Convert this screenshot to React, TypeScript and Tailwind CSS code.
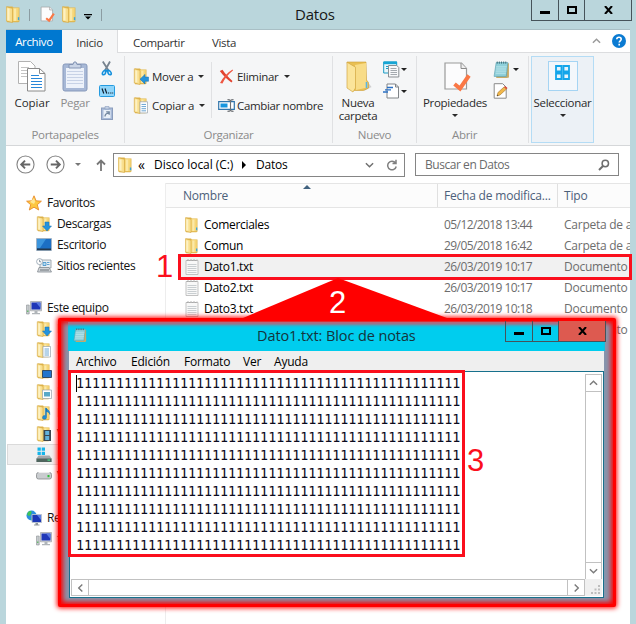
import React from 'react';

type IconProps = { className?: string };

const Folder: React.FC<IconProps & { badge?: React.ReactNode }> = ({ className = 'w-4 h-4', badge }) => (
  <svg viewBox={badge ? '0 0 16 16' : '1 0 13 16'} preserveAspectRatio="none" className={`shrink-0 ${className}`}>
    <path d="M2 .5h5l1 1h5.500v13l-1 .7H2z" fill="#dfb54e" />
    <path d="M7 1.800h5.800v12.400H7z" fill="#f6d678" />
    <path d="M8.300 2.500h2.200v11.500H8.300z" fill="#fbe9a8" />
    <path d="M1.300.700l5.700 1.500v13.300l-5.700-1.300z" fill="#f9e08f" stroke="#d3a43c" strokeWidth=".6" />
    <path d="M2.300 2.200l2 .5v11l-2-.4z" fill="#fdf1c4" />
    {!badge && <path d="M12 10.500h1.300v2.800H12z" fill="#3aa5dc" />}
    {badge}
  </svg>
);

const BigFolder: React.FC = () => (
  <svg viewBox="0 0 28 32" className="w-7 h-8">
    <path d="M20 30l7.500-4-3-4z" fill="#a9a9a9" opacity=".5" />
    <path d="M3 1h19l.500 18 2 2.500v5.500l-5 2.500H9z" fill="#e9bf53" stroke="#cf9f37" strokeWidth=".6" />
    <path d="M11 4l11-2v18l1.500 2v4.500L12 29z" fill="#f8dc88" />
    <path d="M3 1.200l8.500 5V27l-2.500 4-6-4z" fill="#fbe49a" stroke="#d3a744" strokeWidth=".7" />
    <path d="M22.500 21v6" stroke="#58b4e6" strokeWidth="1.600" />
  </svg>
);

const PageCheck: React.FC<IconProps> = ({ className }) => (
  <svg viewBox="0 0 28 32" className={className}>
    <path d="M2 2h16.500l5 5.500V28H2z" fill="#fcfcfd" stroke="#9a9a9a" strokeWidth="1.200" />
    <path d="M18 2v5.500h5.500" fill="#eee" stroke="#8a8a8a" />
    <path d="M11.500 23l5.500 4.500 9-13" fill="none" stroke="#fa7846" strokeWidth="4" />
  </svg>
);

const CopyIcon: React.FC = () => (
  <svg viewBox="0 0 28 31" className="w-7 h-[31px]">
    <path d="M.5.500h12l4.500 4.500v17.500H.5z" fill="#fff" stroke="#b2b2b2" />
    <path d="M3 6.500h8M3 9.500h8M3 12.500h8M3 15.500h8" stroke="#c4c4c4" />
    <path d="M9.500 7.500h12l5.500 5v17.500H9.500z" fill="#fff" stroke="#8a8a8a" />
    <path d="M21.500 7.500v5H27" fill="none" stroke="#8a8a8a" />
    <path d="M13 14.500h8M13 17.500h11M13 20.500h11M13 23.500h11M13 26.500h11" stroke="#2987d8" />
  </svg>
);

const PasteIcon: React.FC = () => (
  <svg viewBox="0 0 26 31" className="w-[26px] h-[31px]">
    <rect x="1" y="3" width="24" height="27" rx="2" fill="#a7b8d6" stroke="#8799bb" />
    <rect x="4" y="7" width="18" height="20" fill="#edf2fa" />
    <path d="M5 10.500h16M5 13.500h16M5 16.500h16M5 19.500h16M5 22.500h16" stroke="#c7d2e6" />
    <path d="M7 7V3.500h4L12 1h2l1 2.500h4V7z" fill="#c9d4e6" stroke="#8495b4" />
  </svg>
);

const Scissors: React.FC = () => (
  <svg viewBox="0 0 12 16" className="w-3 h-4">
    <path d="M1.800.500l5.700 9M9 .5L4 9.500" stroke="#77838f" strokeWidth="1.800" fill="none" />
    <path d="M5.200 9.500C3 9 1.300 11 1.300 12.700c0 1.400 2.500 1.500 3-.2zM6.300 9.500c2.200-.5 4 1.500 4 3.200 0 1.400-2.500 1.500-3-.2z" fill="#dff1fc" stroke="#1590dc" strokeWidth="1.600" />
  </svg>
);

const CopyPath: React.FC = () => (
  <svg viewBox="0 0 16 12" className="w-4 h-3">
    <rect x=".5" y=".5" width="15" height="11" rx="1" fill="#8fd5fa" stroke="#259be0" />
    <path d="M3 3.500l1.800 5M6 3.500l1.800 5" stroke="#123" strokeWidth="1.200" />
    <path d="M9 8h1.200M11.200 8h1.200M13.200 8h1" stroke="#123" strokeWidth="1.200" />
  </svg>
);

const PasteShortcut: React.FC = () => (
  <svg viewBox="0 0 12 14" className="w-3 h-3.5">
    <rect x=".5" y="2" width="11" height="11.500" fill="#a9bbd8" stroke="#8b9dbd" />
    <path d="M4 .5h4v2.500H4z" fill="#c4d0e4" stroke="#8b9dbd" strokeWidth=".6" />
    <path d="M2.500 4h7v8h-7z" fill="#eaf0f8" />
    <path d="M4 10.500C4 8.500 5 7.500 7.500 7.200M5.200 5.800h3v3" fill="none" stroke="#71869f" strokeWidth="1.300" />
  </svg>
);

const DeleteIcon: React.FC = () => (
  <svg viewBox="0 0 15 15" className="w-[15px] h-[15px]">
    <path d="M.8 2l2.700-1.200C6 5 10 9 13.500 12l-1 1.500C8 10.500 4 6.500.8 2z" fill="#e2432f" />
    <path d="M13.500.500C8 4 4 8.500 1 14l2.500.500C5.500 10 9 5 14 1.500z" fill="#ee5641" />
  </svg>
);

const RenameIcon: React.FC = () => (
  <svg viewBox="0 0 17 13" className="w-[17px] h-[13px]">
    <path d="M.7 2.700h15.600v7.600H.7z" fill="#fff" stroke="#3175ab" strokeWidth="1.200" />
    <path d="M2.500 4.500h7v4h-7z" fill="#1695de" />
    <path d="M9.500.600c1.500 0 2.500.3 3 1 .5-.7 1.500-1 3-1M12.500 1.500v10M9.500 12.400c1.500 0 2.500-.3 3-1 .5.700 1.500 1 3 1" fill="none" stroke="#6f7276" strokeWidth="1.100" />
  </svg>
);

const NewItem: React.FC = () => (
  <svg viewBox="0 0 17 17" className="w-[17px] h-[17px]">
    <path d="M.7 1h13v11H.7z" fill="#e9f6fb" stroke="#1b9cc4" />
    <path d="M.5.500h13.500v2.700H.5z" fill="#16a5d4" />
    <path d="M3 5.500h2.500M3 7.500h2" stroke="#1b9cc4" />
    <path d="M5.500 4.500h8.300l2 2v9.500H5.500z" fill="#f7f8f9" stroke="#8b8f93" />
    <path d="M7.500 7.500h6M7.500 9.500h6.500M7.500 11.500h6.500M7.500 13.500h6.500" stroke="#a4a9ae" />
  </svg>
);

const EasyAccess: React.FC = () => (
  <svg viewBox="0 0 17 16" className="w-[17px] h-4">
    <path d="M4 1h8.500l3 3v11H4z" fill="#fff" stroke="#808488" />
    <path d="M12.500 1v3h3" fill="none" stroke="#808488" />
    <path d="M4 4.500h6M2 6.800h6M0 9h5" stroke="#2a70c4" strokeWidth="1.300" />
  </svg>
);

const NotepadIcon: React.FC<IconProps> = ({ className = 'w-4 h-4' }) => (
  <svg viewBox="0 0 16 16" className={className}>
    <path d="M4 2h11v13.500l-2 .5H3z" fill="#c9ab68" />
    <path d="M3 1.500h11l-1.500 13H1z" fill="#8fd0da" stroke="#5a9fae" strokeWidth=".6" />
    <path d="M3 5.500h10M3 7.500h9.500M2.500 9.500h10M2.500 11.500h9.500" stroke="#c9ebf0" strokeWidth=".7" />
    <path d="M4 .5v2M6 .5v2M8 .5v2M10 .5v2M12 .5v2" stroke="#3f6f7a" strokeWidth=".9" />
  </svg>
);

const EditIcon: React.FC = () => (
  <svg viewBox="0 0 15 16" className="w-[15px] h-4">
    <path d="M1.200.700h8.500l3.500 3.500v11h-12z" fill="#fff" stroke="#8b8b8b" />
    <path d="M4 13l1-3.500L11 4l2.500 2L7 12z" fill="#f2b84b" stroke="#a37428" strokeWidth=".6" />
    <path d="M11 4l1-1 2.500 2-1 1.200z" fill="#df4a3c" />
    <path d="M4 13l.4-1.500 1 .9z" fill="#333" />
  </svg>
);

const TextFile: React.FC = () => (
  <svg viewBox="0 0 14 16" className="w-3.5 h-4">
    <path d="M1 1.500h12v14H1z" fill="#f8f8f8" stroke="#b4b4b4" strokeWidth=".8" />
    <path d="M2 2l1-1.500L4.500 2 6 .5 7.500 2 9 .5 10.500 2 12 .5" fill="none" stroke="#9d9d9d" strokeWidth=".8" />
    <path d="M2.500 5.500h9M2.500 7.500h9M2.500 9.500h9M2.500 11.500h9M2.500 13.500h9" stroke="#c3c8cc" strokeWidth=".9" />
  </svg>
);

const Star: React.FC = () => (
  <svg viewBox="0 0 16 16" className="w-4 h-4">
    <path d="M8 .8l2.100 5 5.300.400-4.100 3.500 1.400 5.300L8 12.200 3.300 15l1.400-5.300L.6 6.200l5.300-.4z" fill="#fdc73f" stroke="#e88b2b" strokeWidth=".9" />
    <path d="M8 3l1.200 3.700L8 9 4 7z" fill="#fee694" />
  </svg>
);

const Desktop: React.FC = () => (
  <svg viewBox="0 0 16 13" className="w-4 h-[13px]">
    <path d="M.5.500h15v12H.5z" fill="#1c6fc4" stroke="#a4b2bf" strokeWidth=".8" />
    <path d="M1 1h9L4 10H1z" fill="#3c95dd" />
    <path d="M1 10.500h14v1.700H1z" fill="#23384d" />
  </svg>
);

const Recent: React.FC = () => (
  <svg viewBox="0 0 16 15" className="w-4 h-[15px]">
    <path d="M4 2h11v8H4z" fill="#e9eef2" stroke="#8e979f" strokeWidth=".8" />
    <path d="M7 4.500h3v3H7zM11 4.500h2.500M11 6.500h2.500" stroke="#3c8fc9" fill="#b8dcf0" strokeWidth=".8" />
    <path d="M3 9.500h10l2.500 4.500h-14z" fill="#d0d4d8" stroke="#848b92" strokeWidth=".8" />
    <path d="M4 12h9" stroke="#6b7278" />
    <circle cx="3.600" cy="3.600" r="3" fill="#fff" stroke="#8fa0ad" strokeWidth=".8" />
    <path d="M3.600 1.800v2h1.600" fill="none" stroke="#567" strokeWidth=".7" />
  </svg>
);

const Computer: React.FC = () => (
  <svg viewBox="0 0 16 14" className="w-4 h-3.5">
    <path d="M.5 4h2.700v9H.5z" fill="#c7cbce" stroke="#8c9194" strokeWidth=".6" />
    <path d="M1.300 9.500h1v1.500h-1z" fill="#43b649" />
    <path d="M4.500.500h11v9.300h-11z" fill="#d6d9dc" stroke="#9da2a6" strokeWidth=".7" />
    <path d="M5.500 1.500h9v7h-9z" fill="#1f37b8" />
    <path d="M10 1.500h4.500V7z" fill="#5878e0" />
    <path d="M8.500 10h3v2h2.500v1.200H6V12h2.500z" fill="#b0b5b9" />
  </svg>
);

const SystemDisk: React.FC = () => (
  <svg viewBox="0 0 16 16" className="w-4 h-4">
    <path d="M1.500.500h3.300v3.300H1.500zM5.700.500H9v3.300H5.700zM1.500 4.700h3.300V8H1.500zM5.700 4.700H9V8H5.700z" fill="#14b4ea" />
    <path d="M2.500 8.500h11l2 3v3.500h-15v-3.500z" fill="#a3a8ab" />
    <path d="M.5 11.500h15V15H.5z" fill="#4f655e" />
    <path d="M11.500 12.500h2.500v1.200h-2.500z" fill="#4fe08c" />
  </svg>
);

const Disk: React.FC = () => (
  <svg viewBox="0 0 16 9" className="w-4 h-[9px]">
    <rect x=".5" y="1.500" width="15" height="6.500" rx="2" fill="#c9cccf" stroke="#85898c" strokeWidth=".8" />
    <path d="M2.500 1.500h11" stroke="#eee" />
    <path d="M11.500 4h2v2.200h-2z" fill="#2fbf3a" />
  </svg>
);

const Network: React.FC = () => (
  <svg viewBox="0 0 16 16" className="w-4 h-4">
    <circle cx="5.500" cy="5.500" r="5" fill="#2b8fe0" />
    <path d="M2 2c3-2 4-1 3.500 1L4 6 1 5zM5 9c1-2 2-2 3-1L6 10.500z" fill="#3fc455" />
    <path d="M6 4.500h9.500v8H6z" fill="#1d37b6" stroke="#bcc5cd" strokeWidth=".9" />
    <path d="M11 5h4v5z" fill="#5c80e6" />
    <path d="M9.500 13h2.500v1.500h1.500v1H8v-1h1.500z" fill="#8f979d" />
  </svg>
);

const Caret: React.FC<IconProps> = ({ className = 'text-[#222]' }) => (
  <svg viewBox="0 0 6 3" className={`w-1.5 h-[3px] shrink-0 ${className}`}><path d="M0 0h6L3 3z" fill="currentColor" /></svg>
);

const Chevron: React.FC<IconProps> = ({ className = '' }) => (
  <svg viewBox="0 0 10 6" className={`w-[9px] h-[6px] ${className}`}><path d="M1 5l4-4 4 4" fill="none" stroke="currentColor" strokeWidth="1.600" /></svg>
);

const badges = {
  down: <path d="M9 6h4v4h2.500L11 15 6.500 10H9z" fill="#2493dc" stroke="#1672b4" strokeWidth=".5" />,
  doc: <g><path d="M7 4.500h7.500V15H7z" fill="#fff" stroke="#9aa4ad" strokeWidth=".7" /><path d="M8.500 7h4.500M8.500 9h4.500M8.500 11h4.500M8.500 13h4.500" stroke="#4a92c9" strokeWidth=".8" /></g>,
  desk: <path d="M6.500 7.500h9v7h-9z" fill="#2275cc" stroke="#20374f" strokeWidth=".8" />,
  pic: <g><path d="M6.500 6h9v8.500h-9z" fill="#fff" stroke="#9aa4ad" strokeWidth=".7" /><path d="M8 8h6v4.500H8z" fill="#58a9c8" /></g>,
  music: <path d="M10.500 3v9.500a2 1.800 0 1 1-1.200-1.700V3c2 1.500 5 2.500 4.500 6.500-.5-2-1.800-2.500-3.300-3z" fill="#1f8fd8" stroke="#176da8" strokeWidth=".5" />,
  film: <g><path d="M7.500 4h7.500v11H7.500z" fill="#3d474f" /><path d="M9.200 5h4v4h-4zM9.200 10h4v4h-4z" fill="#62b1dc" /></g>,
  left: <path d="M15.500 8.500v4H12V15l-5-4.500L12 6v2.500z" fill="#2493dc" stroke="#1672b4" strokeWidth=".5" />,
};

const WindowButtons: React.FC<{ closeClass?: string }> = ({ closeClass = '' }) => (
  <div className="flex h-[21px] w-[101px] border border-t-0 border-[#46535a] text-black">
    <div className="w-[27px] flex justify-center items-center border-r border-[#46535a]"><span className="w-[10px] h-[3px] bg-black mt-1" /></div>
    <div className="w-[26px] flex justify-center items-center border-r border-[#46535a]"><span className="w-[10px] h-2 border-2 border-black" /></div>
    <div className={`flex-1 flex justify-center items-center ${closeClass}`}>
      <svg viewBox="0 0 9 8" className="w-[9px] h-2"><path d="M1 0l7 8M8 0L1 8" stroke="#000" strokeWidth="2" /></svg>
    </div>
  </div>
);

const favorites = [
  { name: 'Descargas', icon: <Folder badge={badges.down} /> },
  { name: 'Escritorio', icon: <Desktop /> },
  { name: 'Sitios recientes', icon: <Recent /> },
];

const computer = [
  { name: 'D', icon: <Folder badge={badges.down} /> },
  { name: 'D', icon: <Folder badge={badges.doc} /> },
  { name: 'E', icon: <Folder badge={badges.desk} /> },
  { name: 'I', icon: <Folder badge={badges.pic} /> },
  { name: 'M', icon: <Folder badge={badges.music} /> },
  { name: 'V', icon: <Folder badge={badges.film} /> },
  { name: 'D', icon: <SystemDisk />, selected: true },
  { name: 'V', icon: <Disk /> },
];

const files = [
  { name: 'Comerciales', date: '05/12/2018 13:44', type: 'Carpeta de a', folder: true },
  { name: 'Comun', date: '29/05/2018 16:42', type: 'Carpeta de a', folder: true },
  { name: 'Dato1.txt', date: '26/03/2019 10:17', type: 'Documento', selected: true },
  { name: 'Dato2.txt', date: '26/03/2019 10:17', type: 'Documento' },
  { name: 'Dato3.txt', date: '26/03/2019 10:18', type: 'Documento' },
  { name: '', date: '', type: 'Documento' },
];

const TreeItem: React.FC<{ name: string; icon: React.ReactNode; selected?: boolean; root?: boolean }> = ({ name, icon, selected, root }) => (
  <div className={`h-[21px] flex items-center gap-1 ml-px ${root ? 'pl-[19px]' : 'pl-[29px]'} ${selected ? 'bg-[#f0f0f0] outline outline-1 -outline-offset-1 outline-[#dadada]' : ''}`}>
    <span className="w-4 flex justify-center">{icon}</span>
    <span className="ml-px">{name}</span>
  </div>
);

const Ribbon: React.FC = () => (
  <div className="h-[93px] flex bg-[#f5f6f7] border-b border-[#d5d7d9] pt-[3px] text-[11.500px] tracking-[-0.300px] text-[#2a2a2a]">
    <div className="w-[119px] h-[87px] flex flex-col border-r border-[#e0e1e3]">
      <div className="h-[72px] flex pt-[5px]">
        <div className="w-[52px] flex flex-col items-center"><CopyIcon /><span className="mt-[3px] leading-4 tracking-normal">Copiar</span></div>
        <div className="w-[34px] flex flex-col items-center text-[#8c8c8c]"><PasteIcon /><span className="mt-[3px] leading-4">Pegar</span></div>
        <div className="w-[30px] flex flex-col items-center"><Scissors /><div className="mt-2"><CopyPath /></div><div className="mt-[9px]"><PasteShortcut /></div></div>
      </div>
      <div className="text-center leading-4 text-[#8b8b8b]">Portapapeles</div>
    </div>
    <div className="w-[208px] h-[87px] flex flex-col border-r border-[#e0e1e3]">
      <div className="h-[72px] flex pt-[6px]">
        <div className="w-[87px] h-[56px] pl-2 border-r border-[#e0e1e3]">
          <div className="h-[29px] flex items-center gap-[3px]"><Folder badge={badges.left} className="w-4 h-[17px]" />Mover a<Caret className="ml-0.5" /></div>
          <div className="h-[29px] flex items-center gap-[3px]"><Folder badge={badges.doc} className="w-4 h-[17px]" />Copiar a<Caret className="ml-0.5" /></div>
        </div>
        <div className="pl-[6px]">
          <div className="h-[29px] flex items-center gap-[3px] pl-px"><DeleteIcon />Eliminar<Caret className="ml-0.5" /></div>
          <div className="h-[29px] flex items-center gap-[2px] tracking-[-0.350px]"><RenameIcon />Cambiar nombre</div>
        </div>
      </div>
      <div className="text-center leading-4 text-[#8b8b8b]">Organizar</div>
    </div>
    <div className="w-[84px] h-[87px] flex flex-col border-r border-[#e0e1e3]">
      <div className="h-[72px] flex pt-[5px]">
        <div className="w-[50px] flex flex-col items-center"><BigFolder /><span className="mt-[3px] text-center leading-[13px]">Nueva<br />carpeta</span></div>
        <div className="flex flex-col gap-[5px]">
          <div className="flex items-center gap-px"><NewItem /><Caret /></div>
          <div className="flex items-center gap-px"><EasyAccess /><Caret /></div>
        </div>
      </div>
      <div className="text-center leading-4 text-[#8b8b8b]">Nuevo</div>
    </div>
    <div className="w-[112px] h-[87px] flex flex-col border-r border-[#e0e1e3]">
      <div className="h-[72px] flex pt-[5px]">
        <div className="w-[76px] flex flex-col items-center"><PageCheck className="w-7 h-8 ml-[3px]" /><span className="mt-[2px] leading-4">Propiedades</span><Caret className="mt-[3px]" /></div>
        <div className="flex flex-col gap-[5px]">
          <div className="flex items-center gap-[3px]"><NotepadIcon className="w-[17px] h-[17px]" /><Caret /></div>
          <EditIcon />
        </div>
      </div>
      <div className="text-center leading-4 pr-4 text-[#8b8b8b]">Abrir</div>
    </div>
    <div className="ml-[2px] w-[63px] h-[87px] bg-[#ecf1f6] border border-[#b4dcf5] flex flex-col items-center pt-1">
      <div className="w-[30px] h-[30px] border border-[#a5d4f3] bg-[#f3f7fb] flex justify-center pt-[3px]">
        <svg viewBox="0 0 15 15" className="w-[15px] h-[15px]"><path d="M1 1h5.500v5.500H1zM8.500 1H14v5.500H8.500zM1 8.500h5.500V14H1zM8.500 8.500H14V14H8.500z" fill="#e5f4fc" stroke="#12a5ea" strokeWidth="1.800" /></svg>
      </div>
      <span className="mt-1 leading-4">Seleccionar</span>
      <Caret className="mt-[3px]" />
    </div>
  </div>
);

const AddressBar: React.FC = () => (
  <div className="h-[37px] flex items-center pl-[10px] pr-[11px]">
    <svg viewBox="0 0 20 20" className="w-[19px] h-[19px]"><circle cx="10" cy="10" r="9" fill="#fff" stroke="#858585" strokeWidth="1.200" /><path d="M15 10H6M9.500 6L5.500 10l4 4" fill="none" stroke="#666" strokeWidth="2" /></svg>
    <svg viewBox="0 0 20 20" className="w-[19px] h-[19px] ml-[11px]"><circle cx="10" cy="10" r="9" fill="#fff" stroke="#858585" strokeWidth="1.200" /><path d="M5 10h9M10.500 6l4 4-4 4" fill="none" stroke="#666" strokeWidth="2" /></svg>
    <Caret className="ml-[10px] text-[#777]" />
    <svg viewBox="0 0 10 12" className="w-[10px] h-3 ml-[15px]"><path d="M5 12V2M1 5.500l4-4 4 4" fill="none" stroke="#777" strokeWidth="1.800" /></svg>
    <div className="ml-[7px] w-[292px] h-6 border border-[#858585] flex items-center pl-1">
      <Folder className="w-[14px] h-4" />
      <span className="ml-[6px] w-[15px] text-[14px]">«</span>
      <span className="ml-[1px] w-[88px] tracking-[-0.050px]">Disco local (C:)</span>
      <svg viewBox="0 0 4 8" className="w-1 h-2"><path d="M0 0l4 4-4 4z" /></svg>
      <span className="ml-[10px]">Datos</span>
      <Chevron className="rotate-180 ml-auto text-[#6f6f6f]" />
      <svg viewBox="0 0 12 12" className="w-3 h-3 ml-[12px] mr-[6px]"><path d="M9.500 4A4.300 4.300 0 1 0 10.200 7.500M10 .8v3.700H6.500" fill="none" stroke="#808080" strokeWidth="1.500" /></svg>
    </div>
    <div className="ml-[10px] w-[204px] h-[23px] border border-[#858585] flex items-center justify-between pl-[9px] pr-2 tracking-[-0.450px] text-[#6b6b6b]">
      Buscar en Datos
      <svg viewBox="0 0 12 12" className="w-3 h-3"><circle cx="7.300" cy="4.500" r="3.200" fill="none" stroke="#6d6d6d" strokeWidth="1.500" /><path d="M5 7l-4 4" stroke="#6d6d6d" strokeWidth="2" /></svg>
    </div>
  </div>
);

const Explorer: React.FC = () => (
  <div className="h-full flex flex-col pl-[6px] pr-[6px] bg-[#bad6dc]">
    <div className="h-[30px] shrink-0 relative border-b border-[#a9bfc5]">
      <div className="h-[29px] flex items-center">
        <Folder className="w-[14px] h-[17px]" />
        <span className="ml-[9px] w-px h-3 bg-[#8b9ca2]" />
        <PageCheck className="w-[15px] h-[17px] ml-[10px]" />
        <Folder className="w-[14px] h-[17px] ml-[7px]" />
        <svg viewBox="0 0 8 6" className="w-2 h-1.5 ml-[8px] mt-1"><path d="M0 0h8v1.300H0zM1 2.500h6L4 5.500z" /></svg>
        <span className="ml-[9px] w-px h-3 bg-[#8b9ca2]" />
      </div>
      <div className="absolute left-[289px] top-[4px] text-[15px] leading-5 text-[#161616]">Datos</div>
      <div className="absolute right-[-2px] top-0"><WindowButtons /></div>
    </div>
    <div className="flex-1 min-h-0 flex flex-col bg-white">
      <div className="h-[23px] shrink-0 flex leading-[26px] border-b border-[#dcdddf] text-[11.500px] tracking-[-0.350px] text-[#333]">
        <div className="w-14 h-[23px] bg-[#0078d0] text-white text-center leading-6">Archivo</div>
        <div className="w-14 h-6 bg-[#f5f6f7] text-center border-r border-[#dcdddf]">Inicio</div>
        <div className="w-[79px] pl-[15px]">Compartir</div>
        <div className="pl-[15px]">Vista</div>
        <div className="ml-auto flex items-center gap-[11px] pr-1">
          <Chevron className="text-[#9a9a9a]" />
          <svg viewBox="0 0 14 14" className="w-[14px] h-[14px]"><circle cx="7" cy="7" r="7" fill="#0b7bd2" /><path d="M4.800 5.200C4.800 2.600 9.200 2.600 9.200 5.200 9.200 6.800 7.200 6.800 7.200 8.600M7.200 9.800v1.700" fill="none" stroke="#fff" strokeWidth="1.600" /></svg>
        </div>
      </div>
      <Ribbon />
      <AddressBar />
      <div className="flex-1 min-h-0 flex overflow-hidden">
        <div className="w-[159px] shrink-0 pt-[9px] whitespace-nowrap tracking-[-0.370px] text-[#111]">
          <TreeItem root name="Favoritos" icon={<Star />} />
          {favorites.map((item, i) => <TreeItem key={i} {...item} />)}
          <div className="h-[21px]" />
          <TreeItem root name="Este equipo" icon={<Computer />} />
          {computer.map((item, i) => <TreeItem key={i} {...item} />)}
          <div className="h-[21px]" />
          <TreeItem root name="Red" icon={<Network />} />
          <TreeItem name="t" icon={<Computer />} />
        </div>
        <div className="flex-1 min-w-0 border-l border-[#ededed] whitespace-nowrap overflow-hidden">
          <div className="relative h-[25px] flex border-y border-[#e5e5e5] bg-[#fcfcfc] leading-6 text-[#4c607a]">
            <span className="w-[271px] pl-[17px]">Nombre</span>
            <span className="w-[120px] pl-[6px] border-l border-[#e0e0e0]">Fecha de modifica...</span>
            <span className="pl-[6px] border-l border-[#e0e0e0]">Tipo</span>
            <svg viewBox="0 0 8 4" className="absolute left-[137px] top-px w-2 h-1"><path d="M4 0l4 4H0z" fill="#41627f" /></svg>
          </div>
          <div className="pt-[6px]">
            {files.map((f, i) => (
              <div key={i} className={`h-[21px] flex items-center ml-[12px] ${f.selected ? 'bg-[#f1f1f1]' : ''}`}>
                <span className="w-[26px] shrink-0 pl-[7px]">{f.folder ? <Folder className="w-[13px] h-4" /> : <TextFile />}</span>
                <span className="w-[240px] shrink-0 tracking-[-0.300px] text-black">{f.name}</span>
                <span className="w-[120px] shrink-0 tracking-[-0.580px] text-[#6d6d6d]">{f.date}</span>
                <span className="tracking-[-0.250px] text-[#6d6d6d]">{f.type}</span>
              </div>
            ))}
          </div>
        </div>
      </div>
    </div>
  </div>
);

const line = '1'.repeat(48);

const ScrollButton: React.FC<IconProps & { turn: string }> = ({ turn, className = '' }) => (
  <div className={`w-[17px] h-[17px] shrink-0 flex items-center justify-center border-[#c1c1c1] text-[#7c7c7c] ${className}`}><Chevron className={turn} /></div>
);

const Notepad: React.FC = () => (
  <div className="absolute left-[58px] top-[318px] w-[558px] h-[289px] rounded-[2px] bg-[#f00] shadow-[0_0_5px_1px_#f00] p-[3px]">
    <div className="h-full bg-[#8795ad] shadow-[inset_0_0_5px_2px_#f00] flex flex-col pt-px pl-2 pr-[9px] pb-[6px]">
      <div className="-mx-px h-[29px] shrink-0 relative bg-[#00cdee] shadow-[inset_0_4px_3px_-1px_#b7677b]">
        <NotepadIcon className="absolute left-[5px] top-[5px] w-[14px] h-4" />
        <div className="absolute left-[189px] top-[4px] text-[14.500px] leading-5 tracking-[-0.100px] text-[#14343c] whitespace-nowrap">Dato1.txt: Bloc de notas</div>
        <div className="absolute right-[-1px] top-[-1px]"><WindowButtons closeClass="bg-[#dd5a50]" /></div>
      </div>
      <div className="h-[20px] shrink-0 flex bg-[#efefef] leading-[21px] text-black pl-[7px] whitespace-nowrap">
        <span className="w-[55px]">Archivo</span>
        <span className="w-[53px]">Edición</span>
        <span className="w-[59px]">Formato</span>
        <span className="w-[31px]">Ver</span>
        <span>Ayuda</span>
      </div>
      <div className="flex-1 min-h-0 flex flex-col bg-white border border-[#17708c] p-px">
        <div className="flex-1 min-h-0 flex justify-between">
          <div className="pl-[5px] pt-[2px] font-['DejaVu_Sans_Mono',monospace] text-[13.300px] leading-[18px] tracking-normal text-[#0b0b20]">
            {Array.from({ length: 10 }, (_, i) => (
              <div key={i} className={i === 0 ? 'relative before:absolute before:left-0 before:top-0 before:w-px before:h-[17px] before:bg-black' : ''}>{line}</div>
            ))}
          </div>
          <div className="w-[17px] mt-px flex flex-col justify-between border border-b-0 border-[#c1c1c1]">
            <ScrollButton turn="" className="w-full border-b" />
            <ScrollButton turn="rotate-180" className="w-full border-t" />
          </div>
        </div>
        <div className="h-[17px] shrink-0 flex">
          <div className="flex-1 flex justify-between border border-[#c1c1c1]">
            <ScrollButton turn="-rotate-90" className="h-full border-r" />
            <ScrollButton turn="rotate-90" className="h-full border-l" />
          </div>
          <div className="w-[17px] bg-[#f0f0f0] flex items-end justify-end p-0.5">
            <svg viewBox="0 0 9 9" className="w-[9px] h-[9px]"><path d="M7 0h2v2H7zM7 3.500h2v2H7zM7 7h2v2H7zM3.500 3.500h2v2h-2zM3.500 7h2v2h-2zM0 7h2v2H0z" fill="#bdbdbd" /></svg>
          </div>
        </div>
      </div>
    </div>
  </div>
);

const Annotations: React.FC = () => (
  <div className="font-['Liberation_Sans',sans-serif] text-[31px] leading-8 tracking-normal text-[#fb0f1d]">
    <div className="absolute left-[178px] top-[254px] w-[454px] h-[26px] border-3 border-[#fb0f1d]" />
    <div className="absolute left-[68px] top-[370px] w-[397px] h-[187px] border-3 border-[#fb0f1d]" />
    <svg viewBox="0 0 204 42" className="absolute left-[243px] top-[278px] w-[204px] h-[42px]"><path d="M95 0L204 40v2H0v-2z" fill="#f00" /></svg>
    <span className="absolute left-[156px] top-[251px]">1</span>
    <span className="absolute left-[329px] top-[287px] text-white">2</span>
    <span className="absolute left-[467px] top-[445px]">3</span>
  </div>
);

export default function App() {
  return (
    <div className="relative w-[636px] h-[624px] overflow-hidden font-['Open_Sans','Noto_Sans',sans-serif] text-[12px] tracking-[-0.200px]">
      <Explorer />
      <Notepad />
      <Annotations />
    </div>
  );
}
